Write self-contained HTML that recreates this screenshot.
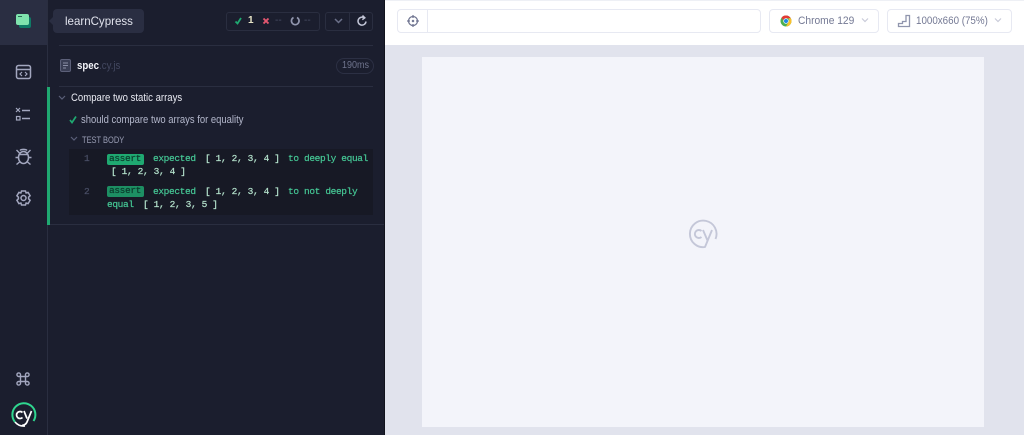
<!DOCTYPE html>
<html><head><meta charset="utf-8"><style>
html,body{margin:0;padding:0;width:1024px;height:435px;overflow:hidden;background:#1b1e2e}
body{position:relative;font-family:"Liberation Sans",sans-serif}
div,svg{position:absolute}
.t{white-space:nowrap;line-height:14px;transform-origin:0 50%}
.m{font-family:"Liberation Mono",monospace;font-size:9.5px;font-weight:normal;-webkit-text-stroke:.2px currentColor;color:#45c795;white-space:pre;line-height:12px;letter-spacing:-.37px}
.w{color:#b5e3cd}
</style></head><body>
<!-- sidebar -->
<div style="left:0;top:0;width:47px;height:435px;background:#1b1e2e;border-right:1px solid #2a2e40"></div>
<div style="left:0;top:0;width:47px;height:45px;background:#2a2e42"></div>
<svg style="left:0;top:0" width="48" height="435" fill="none">
<rect x="19" y="17" width="12" height="11" rx="2" fill="#0f7a66"/>
<rect x="16" y="14" width="13" height="11" rx="2" fill="#7fe3ad"/>
<path d="M18 16.500h4" stroke="#2a6a55" stroke-width="1"/>
<g stroke="#a3a7bf" stroke-width="1.500">
<rect x="16.500" y="65.500" width="14" height="13" rx="2"/><path d="M17 69.500h13"/>
<path d="M22 72l-2 2 2 2M25 72l2 2-2 2" stroke-width="1.200"/>
<path d="M22 110.500h8M22 118.500h8"/><path d="M16 108l4 4M20 108l-4 4" stroke-width="1.200"/><rect x="16.500" y="116.500" width="3.500" height="3.500" stroke-width="1.200"/>
<ellipse cx="23.500" cy="157.500" rx="5" ry="6"/><path d="M20 150.500c1-1.500 6-1.500 7 0M18.500 157.500h-3M28.500 157.500h3M19.500 153l-3-3M27.500 153l3-3M19.500 162l-3 2.500M27.500 162l3 2.500M19 154.500h9" stroke-width="1.400"/>
<path d="M21.500 191h4l.6 2 2-.6 2 3.300-1.500 1.500v1.600l1.500 1.500-2 3.300-2-.6-.6 2h-4l-.6-2-2 .6-2-3.300 1.500-1.500v-1.600l-1.500-1.500 2-3.300 2 .6z"/><circle cx="23.500" cy="198" r="2.500"/>
<path d="M20.500 376.500h5v5h-5zM20.500 376.500v-1.500a1.800 1.800 0 1 0-1.800 1.500h1.800M25.500 376.500v-1.500a1.800 1.800 0 1 1 1.800 1.500h-1.800M20.500 381.500v1.500a1.800 1.800 0 1 1-1.800-1.500h1.800M25.500 381.500v1.500a1.800 1.800 0 1 0 1.800-1.500h-1.800" stroke-width="1.400"/>
</g>
<path d="M15 422A11.500 11.500 0 0 0 25 426" stroke="#fff" stroke-width="1.600"/>
<path d="M15 422A11.500 11.500 0 1 1 33.500 421" stroke="#2fd68f" stroke-width="2"/>
<path d="M22.500 412.500a3.500 3.500 0 1 0 0 5" stroke="#fff" stroke-width="1.700"/>
<path d="M24 411l3 7.500M31.500 411l-4.500 11c-.6 1.500-2 3-5 3.500" stroke="#fff" stroke-width="1.700"/>
</svg>
<!-- tooltip -->
<svg style="left:48px;top:14px" width="6" height="14"><path d="M6 2L1 7l5 5z" fill="#2a2e42"/></svg>
<div style="left:53px;top:9px;width:91px;height:24px;background:#2a2e42;border-radius:4px"></div>
<div class="t" style="left:65px;top:14px;font-size:12px;color:#e1e3ed;transform:scaleX(.96)">learnCypress</div>
<!-- toolbar -->
<div style="left:226px;top:12px;width:92px;height:17px;border:1px solid #2a2e40;border-radius:3px"></div>
<div style="left:325px;top:12px;width:46px;height:17px;border:1px solid #2a2e40;border-radius:3px"></div>
<div style="left:349px;top:12px;width:1px;height:18px;background:#2a2e40"></div>
<svg style="left:226px;top:10px" width="150" height="22" fill="none">
<path d="M9.500 11.500l2 2 3.500-5.500" stroke="#1fa971" stroke-width="1.800"/>
<path d="M37.500 8.500l5 5M42.500 8.500l-5 5" stroke="#e45770" stroke-width="1.900"/>
<path d="M67.500 7.500a3.800 3.800 0 1 0 3.500 0" stroke="#9095ad" stroke-width="1.700"/>
<path d="M109 9l3.500 3.500 3.500-3.500" stroke="#6b7089" stroke-width="1.500"/>
<path d="M138.500 8a4 4 0 1 0 1.500 3.500M136.500 5.500l2.300 2.300-2.500 1.800" stroke="#c2c5d6" stroke-width="1.500"/>
</svg>
<div class="t" style="left:248px;top:14px;font-size:10px;font-weight:bold;color:#e8e6c8">1</div>
<div class="t" style="left:275px;top:14px;font-size:10px;color:#4a4f66">--</div>
<div class="t" style="left:304px;top:14px;font-size:10px;color:#4a4f66">--</div>
<!-- header lines -->
<div style="left:59px;top:45px;width:314px;height:1px;background:#2a2e40"></div>
<div style="left:59px;top:86px;width:314px;height:1px;background:#2a2e40"></div>
<svg style="left:59px;top:58px" width="14" height="15" fill="none"><rect x="1.500" y="1.500" width="10" height="12" rx="1.500" fill="#3a3e54" stroke="#5c6079"/><path d="M4 5h5M4 7.500h5M4 10h3" stroke="#8a8ea5"/></svg>
<div class="t" style="left:77px;top:59px;font-size:11px;font-weight:bold;color:#f2f3f8;transform:scaleX(.88)">spec<span style="font-weight:normal;color:#434860">.cy.js</span></div>
<div style="left:336px;top:58px;width:36px;height:14px;border:1px solid #2c3044;border-radius:8px"></div>
<div class="t" style="left:342px;top:58px;font-size:10px;line-height:15px;color:#6f748d;transform:scaleX(.9)">190ms</div>
<!-- suite -->
<div style="left:47px;top:87px;width:3px;height:138px;background:#1fa971"></div>
<div style="left:50px;top:224px;width:335px;height:1px;background:#2a2e40"></div>
<svg style="left:57px;top:94px" width="10" height="8" fill="none"><path d="M2 2l3 3 3-3" stroke="#5a5f78" stroke-width="1.200"/></svg>
<div class="t" style="left:71px;top:91px;font-size:11px;color:#e9eaf2;transform:scaleX(.87)">Compare two static arrays</div>
<svg style="left:68px;top:114px" width="11" height="11" fill="none"><path d="M2 6l2 2.500 4-6" stroke="#1fa971" stroke-width="1.700"/></svg>
<div class="t" style="left:81px;top:113px;font-size:11px;color:#b3b7cb;transform:scaleX(.86)">should compare two arrays for equality</div>
<svg style="left:69px;top:135px" width="10" height="8" fill="none"><path d="M2 2l3 3 3-3" stroke="#5a5f78" stroke-width="1.200"/></svg>
<div class="t" style="left:82px;top:133px;font-size:9px;color:#9a9eb5;transform:scaleX(.83)">TEST BODY</div>
<!-- log -->
<div style="left:69px;top:149px;width:304px;height:66px;background:#171925"></div>
<div class="m" style="left:84px;top:153px;color:#4a4f66">1</div>
<div class="m" style="left:84px;top:186px;color:#4a4f66">2</div>
<div style="left:107px;top:154px;width:37px;height:11px;background:#1fa971;border-radius:2px"></div>
<div style="left:107px;top:186px;width:37px;height:11px;background:#1d8f63;border-radius:2px"></div>
<div class="m" style="left:109px;top:153px;color:#0b3b2c">assert</div>
<div class="m" style="left:109px;top:185px;color:#0b3b2c">assert</div>
<div class="m" style="left:153px;top:153px">expected</div>
<div class="m w" style="left:205px;top:153px">[ 1, 2, 3, 4 ]</div>
<div class="m" style="left:288px;top:153px">to deeply equal</div>
<div class="m w" style="left:111px;top:166px">[ 1, 2, 3, 4 ]</div>
<div class="m" style="left:153px;top:186px">expected</div>
<div class="m w" style="left:205px;top:186px">[ 1, 2, 3, 4 ]</div>
<div class="m" style="left:288px;top:186px">to not deeply</div>
<div class="m" style="left:107px;top:199px">equal</div>
<div class="m w" style="left:143px;top:199px">[ 1, 2, 3, 5 ]</div>
<!-- divider -->
<div style="left:384px;top:0;width:1px;height:435px;background:#11131d"></div>
<!-- right -->
<div style="left:385px;top:0;width:639px;height:435px;background:#e1e3ed"></div>
<div style="left:385px;top:0;width:639px;height:45px;background:#fff"></div>
<div style="left:385px;top:0;width:639px;height:1px;background:#eef0f5"></div>
<div style="left:422px;top:57px;width:562px;height:370px;background:#f3f4fa"></div>
<div style="box-sizing:border-box;left:397px;top:9px;width:364px;height:24px;border:1px solid #e7e9f2;border-radius:4px"></div>
<div style="left:427px;top:10px;width:1px;height:22px;background:#e7e9f2"></div>
<svg style="left:405px;top:13px" width="16" height="16" fill="none" stroke="#747994" stroke-width="1.300"><circle cx="8" cy="8" r="4.500"/><path d="M8 2v3M8 11v3M2 8h3M11 8h3"/><circle cx="8" cy="8" r=".6" fill="#747994"/></svg>
<div style="box-sizing:border-box;left:769px;top:9px;width:110px;height:24px;border:1px solid #e7e9f2;border-radius:4px"></div>
<svg style="left:780px;top:15px" width="12" height="12" viewBox="0 0 12 12">
<circle cx="6" cy="6" r="5.500" fill="#4caf50"/>
<path d="M6 .5a5.500 5.500 0 0 1 4.800 2.800H6A2.800 2.800 0 0 0 3.300 5.200L1.500 2.700A5.500 5.500 0 0 1 6 .5z" fill="#e53935"/>
<path d="M10.800 3.300A5.500 5.500 0 0 1 6 11.500l2.400-4.200a2.800 2.800 0 0 0 0-4z" fill="#fbc02d"/>
<circle cx="6" cy="6" r="2.700" fill="#fff"/><circle cx="6" cy="6" r="2" fill="#1e88e5"/></svg>
<div class="t" style="left:798px;top:14px;font-size:11px;color:#747994;transform:scaleX(.93)">Chrome 129</div>
<svg style="left:861px;top:17px" width="8" height="7" fill="none"><path d="M1 1.500l3 3 3-3" stroke="#c9cbd9" stroke-width="1.200"/></svg>
<div style="box-sizing:border-box;left:887px;top:9px;width:125px;height:24px;border:1px solid #e7e9f2;border-radius:4px"></div>
<svg style="left:897px;top:14px" width="14" height="14" fill="none"><path d="M1.500 12.500h11v-11h-3.500v6h-3.500v2h-4z" stroke="#9095ad" stroke-width="1.300"/></svg>
<div class="t" style="left:916px;top:14px;font-size:11px;color:#747994;transform:scaleX(.89)">1000x660 (75%)</div>
<svg style="left:994px;top:17px" width="8" height="7" fill="none"><path d="M1 1.500l3 3 3-3" stroke="#c9cbd9" stroke-width="1.200"/></svg>
<svg style="left:688px;top:219px" width="30" height="30" fill="none" stroke="#c4c7d8" stroke-width="1.900">
<path d="M17.500 28A13.300 13.300 0 1 1 27.500 20"/>
<path d="M13.500 12a4 4 0 1 0 0 6"/>
<path d="M15 11l4.500 10.500M24 11l-7 17"/>
</svg>
</body></html>
